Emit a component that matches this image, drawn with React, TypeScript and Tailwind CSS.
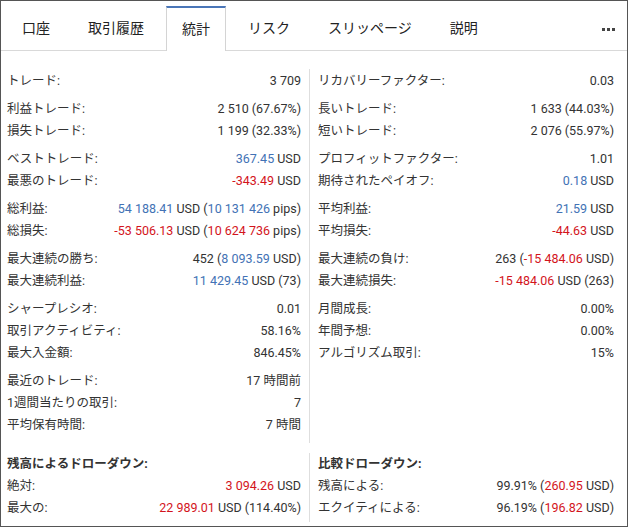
import React from 'react';

type Part = { t: string; c?: 'b' | 'r' };
type Row = { label: string; value: Part[] };

const txt = (t: string, c?: 'b' | 'r'): Part => ({ t, c });

const leftGroups: Row[][] = [
  [{ label: 'トレード:', value: [txt('3 709')] }],
  [
    { label: '利益トレード:', value: [txt('2 510 (67.67%)')] },
    { label: '損失トレード:', value: [txt('1 199 (32.33%)')] },
  ],
  [
    { label: 'ベストトレード:', value: [txt('367.45', 'b'), txt(' USD')] },
    { label: '最悪のトレード:', value: [txt('-343.49', 'r'), txt(' USD')] },
  ],
  [
    { label: '総利益:', value: [txt('54 188.41', 'b'), txt(' USD ('), txt('10 131 426', 'b'), txt(' pips)')] },
    { label: '総損失:', value: [txt('-53 506.13', 'r'), txt(' USD ('), txt('10 624 736', 'r'), txt(' pips)')] },
  ],
  [
    { label: '最大連続の勝ち:', value: [txt('452 ('), txt('8 093.59', 'b'), txt(' USD)')] },
    { label: '最大連続利益:', value: [txt('11 429.45', 'b'), txt(' USD (73)')] },
  ],
  [
    { label: 'シャープレシオ:', value: [txt('0.01')] },
    { label: '取引アクティビティ:', value: [txt('58.16%')] },
    { label: '最大入金額:', value: [txt('846.45%')] },
  ],
  [
    { label: '最近のトレード:', value: [txt('17 時間前')] },
    { label: '1週間当たりの取引:', value: [txt('7')] },
    { label: '平均保有時間:', value: [txt('7 時間')] },
  ],
];

const rightGroups: Row[][] = [
  [{ label: 'リカバリーファクター:', value: [txt('0.03')] }],
  [
    { label: '長いトレード:', value: [txt('1 633 (44.03%)')] },
    { label: '短いトレード:', value: [txt('2 076 (55.97%)')] },
  ],
  [
    { label: 'プロフィットファクター:', value: [txt('1.01')] },
    { label: '期待されたペイオフ:', value: [txt('0.18', 'b'), txt(' USD')] },
  ],
  [
    { label: '平均利益:', value: [txt('21.59', 'b'), txt(' USD')] },
    { label: '平均損失:', value: [txt('-44.63', 'r'), txt(' USD')] },
  ],
  [
    { label: '最大連続の負け:', value: [txt('263 ('), txt('-15 484.06', 'r'), txt(' USD)')] },
    { label: '最大連続損失:', value: [txt('-15 484.06', 'r'), txt(' USD (263)')] },
  ],
  [
    { label: '月間成長:', value: [txt('0.00%')] },
    { label: '年間予想:', value: [txt('0.00%')] },
    { label: 'アルゴリズム取引:', value: [txt('15%')] },
  ],
];

const tabs = ['口座', '取引履歴', '統計', 'リスク', 'スリッページ', '説明'];

function Value({ parts }: { parts: Part[] }) {
  return (
    <span className="whitespace-pre">
      {parts.map((p, i) => (
        <span
          key={i}
          className={p.c === 'b' ? 'text-[#4272b5]' : p.c === 'r' ? 'text-[#d3141c]' : ''}
        >
          {p.t}
        </span>
      ))}
    </span>
  );
}

function StatRow({ row }: { row: Row }) {
  return (
    <div className="flex justify-between h-[22px] leading-[22px]">
      <span>{row.label}</span>
      <Value parts={row.value} />
    </div>
  );
}

function Groups({ groups }: { groups: Row[][] }) {
  return (
    <div className="flex flex-col gap-[6px]">
      {groups.map((g, i) => (
        <div key={i}>
          {g.map((r) => (
            <StatRow key={r.label} row={r} />
          ))}
        </div>
      ))}
    </div>
  );
}

export default function App() {
  return (
    <div
      className="w-[628px] h-[527px] border border-[#555] bg-white text-[#333] text-[12.5px] overflow-hidden"
      style={{ fontFamily: 'Roboto, "Noto Sans CJK JP", sans-serif' }}
    >
      {/* tabs */}
      <div className="h-[50px] border-b border-[#d9d9d9] flex items-end pl-[5px] gap-[6px] relative">
        {tabs.map((t) =>
          t === '統計' ? (
            <div
              key={t}
              className="h-[45px] px-[15px] flex items-center border-x border-[#d4d4d4] border-t-2 border-t-[#4a76b8] bg-white -mb-px pb-[1px] text-[14px] text-[#222]"
            >
              {t}
            </div>
          ) : (
            <div key={t} className="h-[45px] px-4 flex items-center pt-[2px] text-[14px] text-[#222]">
              {t}
            </div>
          )
        )}
        {/* more menu */}
        <div className="absolute right-[12px] top-[27px] flex gap-[2px]">
          <span className="w-[3px] h-[3px] bg-[#444]" />
          <span className="w-[3px] h-[3px] bg-[#444]" />
          <span className="w-[3px] h-[3px] bg-[#444]" />
        </div>
      </div>

      {/* stats */}
      <div className="flex mt-[18px]">
        <div className="w-[308px] pl-[6px] pr-[8px] pt-[1px] pb-[7px]">
          <Groups groups={leftGroups} />
        </div>
        <div className="flex-1 border-l border-[#dedede] pl-[8px] pr-[13px] pt-[1px] pb-[7px]">
          <Groups groups={rightGroups} />
        </div>
      </div>

      {/* drawdown */}
      <div className="flex mt-[10px]">
        <div className="w-[308px] pl-[6px] pr-[8px] pb-[3px]">
          <div className="h-[22px] leading-[22px] font-bold">残高によるドローダウン:</div>
          <StatRow row={{ label: '絶対:', value: [txt('3 094.26', 'r'), txt(' USD')] }} />
          <StatRow row={{ label: '最大の:', value: [txt('22 989.01', 'r'), txt(' USD (114.40%)')] }} />
        </div>
        <div className="flex-1 border-l border-[#dedede] pl-[8px] pr-[13px] pb-[3px]">
          <div className="h-[22px] leading-[22px] font-bold">比較ドローダウン:</div>
          <StatRow row={{ label: '残高による:', value: [txt('99.91% ('), txt('260.95', 'r'), txt(' USD)')] }} />
          <StatRow row={{ label: 'エクイティによる:', value: [txt('96.19% ('), txt('196.82', 'r'), txt(' USD)')] }} />
        </div>
      </div>
    </div>
  );
}
